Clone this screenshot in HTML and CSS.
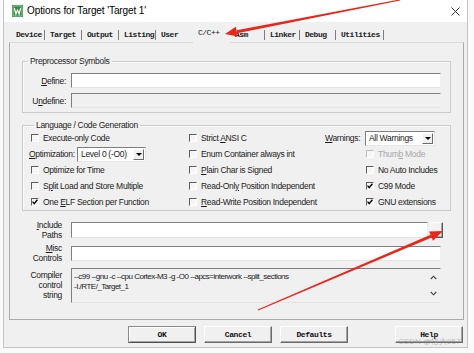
FILE: index.html
```html
<!doctype html>
<html lang="en">
<head>
  <meta charset="utf-8">
  <title>Options for Target 'Target 1'</title>
  <link rel="stylesheet" href="styles.css">
</head>
<body>
<div class="dlg">
  <div class="titlebar">
    <svg class="appicon" width="11" height="12" viewBox="0 0 11 12">
      <rect width="11" height="12" fill="#2f8a3c"/>
      <rect x="1" y="1" width="9" height="10" fill="none" stroke="#a9d8ae" stroke-width=".8"/>
      <polyline points="2.3,3 3.9,9 5.5,5 7.1,9 8.7,3" fill="none" stroke="#fff" stroke-width="1.2"/>
    </svg>
    <span class="title">Options for Target 'Target 1'</span>
    <svg class="close" width="9" height="9" viewBox="0 0 9 9"><path d="M.5 .5L8.5 8.5M8.5 .5L.5 8.5" stroke="#333" stroke-width="1"/></svg>
  </div>

  <div class="tabs">
    <span class="tab first">Device</span>
    <span class="tab">Target</span>
    <span class="tab">Output</span>
    <span class="tab">Listing</span>
    <span class="tab nosep">User</span>
    <span class="tab sel">C/C++</span>
    <span class="tab w35">Asm</span>
    <span class="tab w35">Linker</span>
    <span class="tab w36">Debug</span>
    <span class="tab w48">Utilities</span>
  </div>

  <div class="page">
    <fieldset class="grp pre">
      <legend>Preprocessor Symbols</legend>
      <div class="field"><label><u>D</u>efine:</label><div class="edit"></div></div>
      <div class="field"><label>U<u>n</u>define:</label><div class="edit off"></div></div>
    </fieldset>

    <fieldset class="grp lang">
      <legend>Language / Code Generation</legend>
      <div class="opts">
        <div class="ck c1"><span class="box"></span><span>Execute-only Code</span></div>
        <div class="ck"><span class="box"></span><span>Strict <u>A</u>NSI C</span></div>
        <div class="combo"><span class="lbl w40"><u>W</u>arnings:</span><div class="drop w70">All Warnings<span class="arr"></span></div></div>

        <div class="combo"><span class="lbl w48"><u>O</u>ptimization:</span><div class="drop w69">Level 0 (-O0)<span class="arr"></span></div></div>
        <div class="ck"><span class="box"></span><span>Enum Container always int</span></div>
        <div class="ck c3 dis"><span class="box"></span><span>Thum<u>b</u> Mode</span></div>

        <div class="ck c1"><span class="box"></span><span>Optimize for Time</span></div>
        <div class="ck"><span class="box"></span><span><u>P</u>lain Char is Signed</span></div>
        <div class="ck c3"><span class="box"></span><span>No Auto Includes</span></div>

        <div class="ck c1"><span class="box"></span><span>S<u>p</u>lit Load and Store Multiple</span></div>
        <div class="ck"><span class="box"></span><span>Read-Onl<u>y</u> Position Independent</span></div>
        <div class="ck c3"><span class="box"><svg width="6" height="6" viewBox="0 0 6 6"><polyline points=".6,2.6 2.2,4.6 5.4,.8" fill="none" stroke="#000" stroke-width="1.4"/></svg></span><span>C99 Mode</span></div>

        <div class="ck c1"><span class="box"><svg width="6" height="6" viewBox="0 0 6 6"><polyline points=".6,2.6 2.2,4.6 5.4,.8" fill="none" stroke="#000" stroke-width="1.4"/></svg></span><span>One <u>E</u>LF Section per Function</span></div>
        <div class="ck"><span class="box"></span><span><u>R</u>ead-Write Position Independent</span></div>
        <div class="ck c3"><span class="box"><svg width="6" height="6" viewBox="0 0 6 6"><polyline points=".6,2.6 2.2,4.6 5.4,.8" fill="none" stroke="#000" stroke-width="1.4"/></svg></span><span>GNU extensions</span></div>
      </div>
    </fieldset>

    <div class="lower">
      <div class="row r-inc">
        <label><u>I</u>nclude<br>Paths</label>
        <div class="edit"></div>
        <span class="more"></span>
      </div>
      <div class="row r-misc">
        <label><u>M</u>isc<br>Controls</label>
        <div class="edit"></div>
      </div>
      <div class="row r-cc">
        <label>Compiler<br>control<br>string</label>
        <div class="edit memo">
          <div class="memo-text">--c99 --gnu -c --cpu Cortex-M3 -g -O0 --apcs=interwork --split_sections<br>-I./RTE/_Target_1</div>
          <div class="scroll">
            <svg width="7" height="5" viewBox="0 0 7 5"><polyline points=".8,4 3.5,1.2 6.2,4" fill="none" stroke="#444" stroke-width="1.1"/></svg>
            <svg width="7" height="5" viewBox="0 0 7 5"><polyline points=".8,1 3.5,3.8 6.2,1" fill="none" stroke="#444" stroke-width="1.1"/></svg>
          </div>
        </div>
      </div>
    </div>
  </div>

  <div class="btns">
    <button class="btn dflt">OK</button>
    <button class="btn">Cancel</button>
    <button class="btn">Defaults</button>
    <button class="btn help">Help</button>
  </div>
</div>

<!-- annotation arrows drawn over the screenshot -->
<svg class="marks" width="474" height="353" viewBox="0 0 474 353">
  <polygon points="400,-0.6 400.2,0.6 237.1,33.2 236.5,30.2" fill="#e8271c"/>
  <polygon points="225,34 235.8,26.8 237.7,36.6" fill="#e8271c"/>
  <polygon points="258.2,310.4 257.8,309.6 430.5,234.7 431.6,237.5" fill="#e8271c"/>
  <polygon points="443,231 429.1,231.5 433,240.7" fill="#e8271c"/>
</svg>
<div class="wm">CSDN @悟大957</div>
</body>
</html>
```

FILE: styles.css
```css
*{box-sizing:border-box}
body{margin:0;width:474px;height:353px;overflow:hidden;position:relative;background:#fafafa;font:8.5px/10px "Liberation Sans",Arial,sans-serif;letter-spacing:-.3px;color:#1b1b1b}
u{text-decoration:underline;text-underline-offset:1px}

.dlg{margin-left:3px;width:465px;height:348px;background:#f0f0f0;border:1px solid #c4c4c4;border-top:0;display:flex;flex-direction:column}
.titlebar{height:22px;flex:none;background:#fff;display:flex;align-items:center;padding:0 7px 0 8px}
.appicon{margin-right:4px}
.title{font-size:10px;letter-spacing:-.1px;color:#000}
.close{margin-left:auto}

.tabs{height:20px;flex:none;display:flex;align-items:flex-end;padding-left:4px}
.tab{width:37px;height:10px;margin-bottom:2px;padding-left:5px;border-right:1px solid #7d7d7d;font:bold 8px/10px "Liberation Mono",monospace;letter-spacing:-.5px;color:#222;white-space:nowrap}
.tab.first{padding-left:8px}
.tab.nosep{border-right:0}
.tab.sel{height:17px;margin-bottom:-1px;line-height:13px;border-right:0;background:#f0f0f0;position:relative;font-weight:normal}
.tab.w35{width:35px}
.tab.w36{width:36px}
.tab.w48{width:48px}

.page{height:278px;flex:none;margin:0 3px 0 5px;padding:13px 12px 0 12px;border:1px solid #ababab;border-top-color:#dadada}

.grp{margin:0;min-width:0;border:1px solid #cbcbcb;box-shadow:inset 1px 1px #fafafa}
.grp legend{margin-left:5px;padding:0 2px;line-height:10px}
.pre{padding:7px 9px 4px 0}
.lang{margin-top:7px;padding:0 9px 0 6px}

.field{display:flex;align-items:center;gap:5px;height:15px}
.field + .field{margin-top:5px}
.field label{width:43px;text-align:right}

.edit{flex:1;height:15px;background:#fff;border:1px solid;border-color:#7e7e7e #f0f0f0 #e4e4e4 #7e7e7e}
.edit.off{background:#f0f0f0}

.opts{display:grid;grid-template-columns:160px 136px 1fr;grid-auto-rows:16px;align-items:center}
.ck{display:flex;align-items:center;gap:4px;white-space:nowrap}
.ck.c1{padding-left:2px}
.ck.c3{padding-left:41px}
.box{width:8px;height:8px;flex:none;display:flex;align-items:center;justify-content:center;background:#f6f6f6;border:1px solid;border-color:#5e5e5e #fff #fff #5e5e5e}
.ck.dis{color:#a8a8a8}
.ck.dis .box{border-color:#bdbdbd #fff #fff #bdbdbd}

.combo{display:flex;align-items:center;white-space:nowrap}
.lbl.w40{width:40px}
.lbl.w48{width:48px}
.drop{height:15px;display:flex;align-items:center;padding-left:3px;background:#fff;border:1px solid;border-color:#7e7e7e #e6e6e6 #e6e6e6 #7e7e7e}
.drop.w69{width:69px}
.drop.w70{width:70px}
.arr{margin-left:auto;margin-right:1px;width:11px;height:11px;display:flex;align-items:center;justify-content:center;background:#f0f0f0;border:1px solid;border-color:#fff #6a6a6a #6a6a6a #fff}
.arr::before{content:"";border-left:3px solid transparent;border-right:3px solid transparent;border-top:3px solid #000}

.lower{margin:9px 10px 0 0}
.row{display:flex;gap:9px}
.row label{width:40px;flex:none;text-align:right;line-height:10px}
.r-inc,.r-misc{height:20px;align-items:center}
.r-inc .edit{height:16px}
.more{width:13px;height:16px;flex:none;margin:0 -2px 0 -7px;background:#f3f3f3;border:1px solid;border-color:#fff #5a5a5a #5a5a5a #fff;box-shadow:inset -1px -1px #a0a0a0}
.r-misc{margin-top:3px}
.r-cc{margin-top:5px;align-items:flex-start}
.r-cc label{padding-top:2px}
.memo{height:35px;display:flex;background:#f0f0f0}
.memo-text{flex:1;padding:3px 0 0 2px;font-size:8px;letter-spacing:-.5px;line-height:10px;white-space:nowrap;overflow:hidden}
.scroll{width:14px;display:flex;flex-direction:column;justify-content:space-between;align-items:center;padding:6px 0 6px}

.btns{display:flex;gap:8px;padding:6px 4px 0 124px}
.btn{width:68px;height:17px;padding:0;background:#f0f0f0;border:1px solid;border-color:#fff #6a6a6a #6a6a6a #fff;box-shadow:inset -1px -1px #a3a3a3;font:bold 8px/14px "Liberation Mono",monospace;letter-spacing:-.4px;color:#111}
.btn.dflt{border-color:#8a8a8a #505050 #505050 #8a8a8a;box-shadow:inset 1px 1px #fff,inset -1px -1px #a3a3a3}
.btn.help{margin-left:auto}

.marks{position:absolute;left:0;top:0;pointer-events:none}
.wm{position:absolute;left:398px;top:337px;font-size:8px;letter-spacing:0;color:rgba(140,140,140,.55)}
```
